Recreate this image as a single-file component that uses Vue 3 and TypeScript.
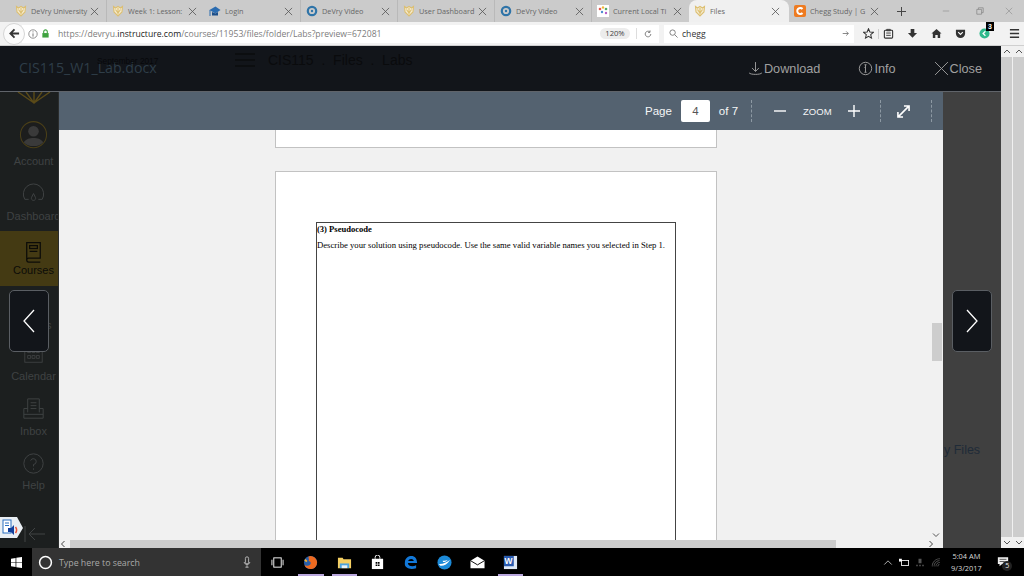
<script setup lang="ts">
interface Tab { title: string; kind: string; active?: boolean; sep?: boolean }
const tabs: Tab[] = [
  { title: 'DeVry University', kind: 'shield', sep: true },
  { title: 'Week 1: Lesson:', kind: 'shield' },
  { title: 'Login', kind: 'cap', sep: true },
  { title: 'DeVry Video', kind: 'ring', sep: true },
  { title: 'User Dashboard', kind: 'shield', sep: true },
  { title: 'DeVry Video', kind: 'ring', sep: true },
  { title: 'Current Local Ti', kind: 'dots' },
  { title: 'Files', kind: 'shield', active: true },
  { title: 'Chegg Study | G', kind: 'chegg' }
]
const navTop = [
  { label: 'Account', kind: 'account' },
  { label: 'Dashboard', kind: 'dash' },
  { label: 'Courses', kind: 'book', active: true },
  { label: 'Grades', kind: 'none' },
  { label: 'Calendar', kind: 'cal' },
  { label: 'Inbox', kind: 'inbox' },
  { label: 'Help', kind: 'help' }
]
</script>

<template>
  <div class="screen">
    <div class="tabbar">
      <div v-for="t in tabs" :key="t.title + t.kind" class="tab" :class="{ active: t.active, sep: t.sep }">
        <svg class="favicon" viewBox="0 0 12 12">
          <g v-if="t.kind === 'shield'" fill="none" stroke="#dcbf72" stroke-width="1.1">
            <path d="M1.5 1.5 L3.5 3 L6 1.5 L8.5 3 L10.5 1.5 L10 7 L6 11 L2 7 Z" fill="#f6ecd0" />
            <path d="M6 3V9.5M3.5 4.5L6 8L8.5 4.5" />
          </g>
          <g v-else-if="t.kind === 'cap'">
            <path d="M0.5 5 L6.5 1.5 L11.5 5 L6.5 8.5 Z" fill="#2b6cb0" />
            <path d="M3 7V10.5H9V7L6.5 8.5Z" fill="#1c4f8a" />
            <path d="M1 5V11" stroke="#2b6cb0" />
          </g>
          <g v-else-if="t.kind === 'ring'">
            <circle cx="6" cy="6" r="4.2" fill="none" stroke="#2f74a8" stroke-width="2.2" />
            <circle cx="6" cy="6" r="1.2" fill="#2f74a8" />
          </g>
          <g v-else-if="t.kind === 'dots'">
            <rect width="12" height="12" fill="#fff" />
            <circle cx="3" cy="4" r="1.3" fill="#e2574c" />
            <circle cx="6" cy="2.5" r="1.2" fill="#f2b632" />
            <circle cx="9" cy="4" r="1.3" fill="#55a868" />
            <circle cx="5" cy="7" r="1.2" fill="#4c8bd0" />
            <circle cx="9" cy="8" r="1.2" fill="#b45cc7" />
          </g>
          <g v-else>
            <rect width="12" height="12" rx="2" fill="#ee7b21" />
            <path d="M8.5 4A3 3 0 1 0 8.5 8" fill="none" stroke="#fff" stroke-width="2" />
          </g>
        </svg>
        <span class="tab-title">{{ t.title }}</span>
        <svg class="tab-close" viewBox="0 0 10 10"><path d="M1 1L9 9M9 1L1 9" stroke="#555" stroke-width="0.9" /></svg>
      </div>
      <svg class="newtab" viewBox="0 0 10 10"><path d="M5 0V10M0 5H10" stroke="#444" stroke-width="1.1" /></svg>
      <div class="winctl">
        <svg viewBox="0 0 10 10"><path d="M1 5H9" stroke="#9a9a9a" /></svg>
        <svg viewBox="0 0 10 10"><path d="M1 3H7V9H1ZM3 3V1H9V7H7" fill="none" stroke="#8a8a8a" /></svg>
        <svg viewBox="0 0 10 10"><path d="M1 1L9 9M9 1L1 9" stroke="#9a9a9a" /></svg>
      </div>
    </div>

    <div class="toolbar">
      <div class="back">
        <svg viewBox="0 0 12 12"><path d="M11 6H2M6 1.5L1.5 6L6 10.5" fill="none" stroke="#333" stroke-width="2" /></svg>
      </div>
      <div class="urlbar">
        <svg class="url-i" viewBox="0 0 10 10"><circle cx="5" cy="5" r="4.2" fill="none" stroke="#777" stroke-width="0.8" /><path d="M5 4.4V7.6M5 2.4V3.4" stroke="#777" /></svg>
        <svg class="url-lock" viewBox="0 0 10 10"><rect x="1.5" y="4.5" width="7" height="5" fill="#3fa33f" /><path d="M3 4.5V3A2 2 0 0 1 7 3V4.5" fill="none" stroke="#3fa33f" stroke-width="1.2" /></svg>
        <span class="url-text">https://devryu.<b>instructure.com</b>/courses/11953/files/folder/Labs?preview=672081</span>
        <span class="zoom-pill">120%</span>
        <span class="url-sep"></span>
        <svg class="reload" viewBox="0 0 10 10"><path d="M8.5 5A3.5 3.5 0 1 1 7.2 2.3M7.5 0.5V3H5" fill="none" stroke="#666" /></svg>
      </div>
      <div class="searchbar">
        <svg class="mag" viewBox="0 0 10 10"><circle cx="4" cy="4" r="3" fill="none" stroke="#777" /><path d="M6.3 6.3L9.5 9.5" stroke="#777" /></svg>
        <span class="search-text">chegg</span>
        <svg class="go" viewBox="0 0 10 10"><path d="M1 5H9M6 2L9 5L6 8" fill="none" stroke="#666" stroke-width="1.1" /></svg>
      </div>
      <div class="tools">
        <svg viewBox="0 0 12 12"><path d="M6 0.8L7.5 4.4L11.3 4.7L8.4 7.2L9.3 11L6 9L2.7 11L3.6 7.2L0.7 4.7L4.5 4.4Z" fill="none" stroke="#333" stroke-width="1.1" /></svg>
        <span class="tool-sep"></span>
        <svg viewBox="0 0 12 12"><rect x="1.5" y="2.5" width="9" height="8.5" rx="1" fill="none" stroke="#333" stroke-width="1.2" /><path d="M4 1.5H8V3H4ZM3.5 5.5H8.5M3.5 8H8.5" fill="none" stroke="#333" /></svg>
        <svg viewBox="0 0 12 12"><path d="M4 1H8V5.5H11L6 10.5L1 5.5H4Z" fill="#333" /></svg>
        <svg viewBox="0 0 12 12"><path d="M6 1L11.5 6H10V11H7.3V7.5H4.7V11H2V6H0.5Z" fill="#333" /></svg>
        <svg viewBox="0 0 12 12"><path d="M1 2H11V6A5 5 0 0 1 1 6Z" fill="#333" /><path d="M3.5 4.5L6 7L8.5 4.5" fill="none" stroke="#fff" stroke-width="1.2" /></svg>
        <div class="ext">
          <svg viewBox="0 0 12 12"><circle cx="6" cy="6" r="5.5" fill="#2fb98c" /><path d="M7 3.5L4.5 6L7 8.5" fill="none" stroke="#fff" stroke-width="1.4" /></svg>
          <span class="ext-badge">3</span>
        </div>
        <svg class="menu" viewBox="0 0 12 12"><path d="M1 2H11M1 6H11M1 10H11" stroke="#333" stroke-width="1.7" /></svg>
      </div>
    </div>

    <div class="page">
      <div class="viewer-head">
        <span class="doc-title">CIS115_W1_Lab.docx</span>
        <span class="ghost-date">September 2017</span>
        <svg class="ghost-burger" viewBox="0 0 20 14"><path d="M0 1H20M0 7H20M0 13H20" stroke="#0b0c0e" stroke-width="1.4" /></svg>
        <span class="ghost-crumb">CIS115 &nbsp;.&nbsp; Files &nbsp;.&nbsp; Labs</span>
        <div class="head-actions">
          <span class="action">
            <svg viewBox="0 0 14 14"><path d="M7 1V9.5M3.8 6.5L7 9.8L10.2 6.5M1 11C2 13 12 13 13 11" fill="none" stroke="#9b9b9b" stroke-width="0.9" /></svg>
            Download
          </span>
          <span class="action">
            <svg viewBox="0 0 14 14"><circle cx="7" cy="7" r="5.8" fill="none" stroke="#9b9b9b" stroke-width="0.9" /><path d="M6 3.5H8M7 3.5V10.5M6 10.5H8M6 6H7" fill="none" stroke="#9b9b9b" stroke-width="0.9" /></svg>
            Info
          </span>
          <span class="action">
            <svg viewBox="0 0 14 14"><path d="M1 1L13 13M13 1L1 13" stroke="#9b9b9b" stroke-width="0.9" /></svg>
            Close
          </span>
        </div>
      </div>

      <div class="body-row">
        <aside class="sidebar">
          <svg class="logo" viewBox="0 0 40 13"><path d="M4 0L20 11L36 0M12 0L20 11L28 0M20 0V11" fill="none" stroke="#5a4a18" stroke-width="1.4" /></svg>
          <div v-for="n in navTop" :key="n.label" class="nav" :class="{ on: n.active, short: n.kind === 'none' }">
            <svg class="nav-icon" viewBox="0 0 30 30">
              <g v-if="n.kind === 'account'" transform="translate(0 -5)">
                <circle cx="15" cy="15" r="13.5" fill="#1c1d1d" stroke="#4a3f18" stroke-width="1.1" />
                <circle cx="15" cy="11.5" r="5.5" fill="#3a3a3a" />
                <path d="M5 23C8 17 22 17 25 23C21 28 9 28 5 23Z" fill="#3a3a3a" />
              </g>
              <g v-else-if="n.kind === 'dash'" fill="none" stroke="#3f4243" stroke-width="1" transform="translate(0 -2)">
                <path d="M6 22A10.5 10.5 0 1 1 24 22H20M10 22H6" />
                <path d="M15 16L13 20A2.2 2.2 0 1 0 17 20Z" />
              </g>
              <g v-else-if="n.kind === 'book'" fill="none" stroke="#0c0c08" stroke-width="1.3" transform="translate(0 3)">
                <path d="M8 24V6H22V22H10A2 2 0 0 0 8 24A2 2 0 0 0 10 26H22" />
                <rect x="11" y="9" width="8" height="3" />
                <path d="M11 15H19" />
              </g>
              <g v-else-if="n.kind === 'cal'" fill="none" stroke="#3f4243" stroke-width="0.9">
                <rect x="6" y="1" width="18" height="22" />
                <path d="M9 10H12V13H9ZM13.5 10H16.5V13H13.5ZM18 10H21V13H18ZM9 16H12V19H9ZM13.5 16H16.5V19H13.5ZM18 16H21V19H18Z" />
              </g>
              <g v-else-if="n.kind === 'inbox'" fill="none" stroke="#3f4243" stroke-width="1">
                <path d="M9 18V4H21V18M12 8H18M12 11H18M12 14H18" />
                <path d="M5 14V24H25V14H21M5 14H9M5 20H25" />
              </g>
              <g v-else-if="n.kind === 'help'" fill="none" stroke="#3f4243" stroke-width="1">
                <circle cx="15" cy="15" r="10" />
                <path d="M12 12A3 3 0 1 1 15 16V18M15 20V21.5" />
              </g>
            </svg>
            <span class="nav-label">{{ n.label }}</span>
          </div>
          <div class="collapse">
            <svg viewBox="0 0 22 16"><path d="M1 0V16M21 8H5M11 2L5 8L11 14" fill="none" stroke="#414445" stroke-width="1" /></svg>
          </div>
        </aside>

        <main class="viewer">
          <div class="pdfbar">
            <span class="pdf-text">Page</span>
            <span class="page-input">4</span>
            <span class="pdf-text">of 7</span>
            <span class="dash-sep first"></span>
            <svg class="pdf-ico" viewBox="0 0 12 12"><path d="M0 6H12" stroke="#fff" stroke-width="1.4" /></svg>
            <span class="zoom-word">ZOOM</span>
            <svg class="pdf-ico" viewBox="0 0 12 12"><path d="M0 6H12M6 0V12" stroke="#fff" stroke-width="1.4" /></svg>
            <span class="dash-sep"></span>
            <svg class="pdf-ico wide" viewBox="0 0 14 14"><path d="M1 13L13 1M7.5 1H13V6.5M1 7.5V13H6.5" fill="none" stroke="#fff" stroke-width="1.7" /></svg>
            <span class="dash-sep"></span>
          </div>
          <div class="doc-row">
            <div class="doc">
              <div class="sheet-end"></div>
              <div class="sheet">
                <div class="box">
                  <div class="box-h">(3) Pseudocode</div>
                  <div class="box-p">Describe your solution using pseudocode. Use the same valid variable names you selected in Step 1.</div>
                </div>
              </div>
            </div>
            <div class="vscroll">
              <span class="vthumb"></span>
              <svg class="vdown" viewBox="0 0 8 8"><path d="M1 2.5L4 5.5L7 2.5" fill="none" stroke="#555" /></svg>
            </div>
          </div>
          <div class="hscroll">
            <svg class="h-arrow" viewBox="0 0 8 8"><path d="M5.5 1L2.5 4L5.5 7" fill="none" stroke="#444" /></svg>
            <span class="hthumb"></span>
            <svg class="h-arrow" viewBox="0 0 8 8"><path d="M2.5 1L5.5 4L2.5 7" fill="none" stroke="#444" /></svg>
          </div>
        </main>

        <div class="dim-right"><span class="ghost-files">y Files</span></div>

        <div class="outer-scroll">
          <div class="os-col">
            <svg class="os-a" viewBox="0 0 8 8"><path d="M1 5.5L4 2.5L7 5.5" fill="none" stroke="#555" /></svg>
            <span class="os-thumb"></span>
            <svg class="os-a" viewBox="0 0 8 8"><path d="M1 2.5L4 5.5L7 2.5" fill="none" stroke="#555" /></svg>
          </div>
          <div class="os-col">
            <svg class="os-a" viewBox="0 0 8 8"><path d="M1 5.5L4 2.5L7 5.5" fill="none" stroke="#555" /></svg>
            <span class="os-thumb"></span>
            <svg class="os-a" viewBox="0 0 8 8"><path d="M1 2.5L4 5.5L7 2.5" fill="none" stroke="#555" /></svg>
          </div>
        </div>

        <button class="pager prev">
          <svg viewBox="0 0 14 24"><path d="M12 1L2 12L12 23" fill="none" stroke="#fff" stroke-width="1.3" /></svg>
        </button>
        <button class="pager next">
          <svg viewBox="0 0 14 24"><path d="M2 1L12 12L2 23" fill="none" stroke="#fff" stroke-width="1.3" /></svg>
        </button>
        <div class="reader">
          <svg viewBox="0 0 24 22">
            <path d="M0 0H17L23 11L17 21H0Z" fill="#e9eef3" />
            <rect x="3" y="3" width="8" height="13" fill="#fff" stroke="#2a6fc0" />
            <path d="M5 6H9M5 8.5H9" stroke="#2a6fc0" />
            <path d="M8 11H11L14 8V18L11 15H8Z" fill="#123f9c" />
            <path d="M15.5 10C17 12 17 14 15.5 16" fill="none" stroke="#e8553a" stroke-width="1.5" />
          </svg>
        </div>
      </div>
    </div>

    <footer class="taskbar">
      <div class="start">
        <svg viewBox="0 0 12 12"><path d="M0 1.8L5 1V5.6H0ZM5.8 0.9L12 0V5.6H5.8ZM0 6.4H5V11L0 10.2ZM5.8 6.4H12V12L5.8 11.1Z" fill="#fff" /></svg>
      </div>
      <div class="search">
        <svg class="cortana" viewBox="0 0 16 16"><circle cx="8" cy="8" r="6.3" fill="none" stroke="#fff" stroke-width="1.6" /></svg>
        <span class="search-hint">Type here to search</span>
        <svg class="mic" viewBox="0 0 10 14"><rect x="3" y="0.5" width="4" height="9" rx="2" fill="none" stroke="#ccc" /><path d="M1.5 7C1.5 11 8.5 11 8.5 7M5 11V13.5M3 13.5H7" fill="none" stroke="#ccc" /></svg>
      </div>
      <div class="apps">
        <span class="app"><svg viewBox="0 0 14 14"><rect x="3" y="2" width="8" height="10" fill="none" stroke="#fff" /><path d="M1 4V10M13 4V10" stroke="#fff" /></svg></span>
        <span class="app open"><svg viewBox="0 0 16 16"><circle cx="8" cy="8" r="7" fill="#2a5fa8" /><path d="M8 1A7 7 0 1 1 1.3 10C3 12 6 12 7.5 10.5C9 9 8 6.5 6 6.5C7 4 5.5 4 6 1.5C6.5 1.2 7.3 1 8 1Z" fill="#ee6a1f" /><path d="M2 5L4 7" stroke="#f7b52c" stroke-width="2" /></svg></span>
        <span class="app open"><svg viewBox="0 0 16 16"><path d="M1 3H6L7 4.5H15V14H1Z" fill="#f5cf62" /><path d="M3 9H13V14H3Z" fill="#4da3dd" /><path d="M5 11H11V14H5Z" fill="#e9f3f9" /></svg></span>
        <span class="app"><svg viewBox="0 0 16 16"><path d="M5.5 4V2.5A2.5 2.5 0 0 1 10.5 2.5V4" fill="none" stroke="#fff" /><path d="M2 4H14V15H2Z" fill="#fff" /><path d="M6 7.5H7.8V9.3H6ZM8.4 7.5H10.2V9.3H8.4ZM6 10H7.8V11.8H6ZM8.4 10H10.2V11.8H8.4Z" fill="#000" /></svg></span>
        <span class="app"><svg viewBox="0 0 16 16"><path d="M2 8C2 3 6 1 9 1C12.5 1 15 3.5 15 8.5H5.2C5.5 12 10 13 14 11V14C8.5 16 1 14.5 2 8ZM5.5 6.5H11.5C11.3 3.5 6.2 3.5 5.5 6.5Z" fill="#1278d8" /></svg></span>
        <span class="app"><svg viewBox="0 0 16 16"><circle cx="8" cy="8" r="7.5" fill="#1c8ad8" /><path d="M2 9.5C6 10 10 8 14 5C11 10 7 12 3.5 11.5ZM6 6C8 6.5 10 6 11.5 5C10 7 8 7.5 6.5 7.5Z" fill="#fff" /></svg></span>
        <span class="app"><svg viewBox="0 0 16 16"><path d="M0.5 6L8 1.5L15.5 6V14H0.5Z" fill="#fff" /><path d="M0.5 6L8 10.5L15.5 6" fill="none" stroke="#000" /></svg></span>
        <span class="app open"><svg viewBox="0 0 16 16"><rect x="1" y="1" width="14" height="14" fill="#dfe9f6" /><rect x="1" y="1" width="10.5" height="11" fill="#2a5bb0" /><text x="1.7" y="10" font-size="9" font-weight="700" fill="#fff" font-family="Liberation Sans, sans-serif">W</text></svg></span>
      </div>
      <div class="tray">
        <svg viewBox="0 0 12 8"><path d="M1.5 6.5L6 2L10.5 6.5" fill="none" stroke="#ccc" /></svg>
        <svg viewBox="0 0 12 10"><rect x="3" y="2.5" width="8.5" height="6" fill="none" stroke="#fff" /><rect x="0" y="0.5" width="3.4" height="3.4" fill="#fff" /></svg>
        <svg viewBox="0 0 12 12"><path d="M4 1H8V7H4ZM1 9H3V11H1ZM5 9H7V11H5ZM9 9H11V11H9Z" fill="#555" /></svg>
        <svg viewBox="0 0 12 12"><path d="M1 11A10 10 0 0 1 11 1M3.5 11A7.5 7.5 0 0 1 11 3.5M6 11A5 5 0 0 1 11 6M8.5 11A2.5 2.5 0 0 1 11 8.5" fill="none" stroke="#aaa" stroke-dasharray="1 0.6" /></svg>
      </div>
      <div class="clock"><span>5:04 AM</span><span>9/3/2017</span></div>
      <div class="notify">
        <svg viewBox="0 0 14 12"><path d="M1 1H13V9H6L3 11.5V9H1Z" fill="#eee" /><path d="M3 3.5H11M3 6H9" stroke="#000" stroke-width="0.7" /></svg>
        <span class="notify-n">5</span>
      </div>
    </footer>
  </div>
</template>

<style>
html, body { margin: 0; padding: 0; background: #000; }
</style>

<style scoped>
.screen { width: 1024px; height: 576px; overflow: hidden; display: flex; flex-direction: column; font-family: "Liberation Sans", Arial, sans-serif; }

.tabbar { height: 22px; background: #cbcbcb; display: flex; align-items: center; padding-left: 10px; box-sizing: border-box; font-family: "Open Sans", sans-serif; flex: none; }
.tab { width: 97px; height: 22px; box-sizing: border-box; display: flex; align-items: center; padding: 0 7px 0 5px; flex: none; position: relative; }
.tab.sep { border-right: 1px solid #b9b9b9; }
.tab.active { width: 100px; background: #f0f0f0; border-radius: 8px 8px 0 0; padding-left: 5px; padding-right: 9px; }
.favicon { width: 12px; height: 12px; flex: none; margin-right: 4px; }
.tab-title { flex: 1; font-size: 7.3px; color: #666; white-space: nowrap; min-width: 0; }
.tab-close { width: 9px; height: 9px; flex: none; margin-left: 3px; }
.newtab { width: 9px; height: 9px; margin-left: 11px; flex: none; }
.winctl { margin-left: auto; display: flex; padding-right: 11px; align-items: center; }
.winctl svg { width: 8px; height: 8px; }
.winctl svg:nth-child(2) { margin-left: 26px; }
.winctl svg:nth-child(3) { margin-left: 21px; }

.toolbar { height: 24px; background: #f2f2f2; border-bottom: 1px solid #cfcfcf; display: flex; align-items: center; box-sizing: border-box; padding-left: 3px; font-family: "Open Sans", sans-serif; flex: none; }
.back { width: 22px; height: 22px; border-radius: 50%; background: #fbfbfb; border: 1px solid #d5d5d5; box-sizing: border-box; display: flex; align-items: center; justify-content: center; flex: none; position: relative; z-index: 1; }
.back svg { width: 11px; height: 11px; }
.urlbar { margin-left: -3px; width: 637px; height: 18px; background: #fff; display: flex; align-items: center; padding-left: 6px; box-sizing: border-box; flex: none; }
.url-i { width: 10px; height: 10px; flex: none; }
.url-lock { width: 9px; height: 9px; margin-left: 3px; flex: none; }
.url-text { margin-left: 8px; font-size: 8.65px; color: #7c7c7c; white-space: nowrap; width: 542px; flex: none; }
.url-text b { font-weight: 400; color: #1c1c1c; }
.zoom-pill { width: 30px; height: 11px; line-height: 11px; border-radius: 6px; background: #ececec; color: #444; font-size: 7.6px; text-align: center; flex: none; }
.url-sep { width: 1px; height: 11px; background: #ddd; margin-left: 6px; flex: none; }
.reload { width: 8px; height: 8px; margin-left: 7px; flex: none; }
.searchbar { margin-left: 5px; width: 190px; height: 18px; background: #fff; display: flex; align-items: center; padding: 0 5px; box-sizing: border-box; flex: none; }
.mag { width: 9px; height: 9px; flex: none; }
.search-text { margin-left: 4px; font-size: 8.6px; color: #333; }
.go { width: 7px; height: 7px; margin-left: auto; margin-right: 0; }
.tools { display: flex; align-items: center; margin-left: 9px; }
.tools > svg { width: 11px; height: 11px; flex: none; margin-right: 13px; }
.tools > svg:first-child { margin-right: 4px; }
.tool-sep { width: 1px; height: 10px; background: #ccc; margin-right: 4px; }
.ext { position: relative; width: 11px; height: 11px; margin-right: 19px; }
.ext svg { width: 11px; height: 11px; display: block; }
.ext-badge { position: absolute; top: -6px; right: -4px; width: 8px; height: 9px; background: #000; color: #fff; font-size: 7px; line-height: 9px; text-align: center; font-weight: 700; font-family: "Liberation Sans", sans-serif; }
.tools > .menu { margin-right: 0; }

.page { flex: 1; min-height: 0; display: flex; flex-direction: column; }
.viewer-head { height: 46px; box-sizing: border-box; background: #12151a; border-bottom: 1px solid #60646a; display: flex; align-items: center; position: relative; padding-left: 19px; padding-right: 19px; flex: none; margin-right: 23px; }
.doc-title { font-family: "Open Sans", sans-serif; font-size: 14.2px; color: #2e3d48; width: 216px; flex: none; margin-top: -3px; }
.ghost-date { position: absolute; left: 97px; top: 10px; font-size: 8.3px; color: #07080a; white-space: nowrap; }
.ghost-burger { width: 20px; height: 14px; flex: none; margin-top: -18px; }
.ghost-crumb { margin-left: 13px; margin-top: -18px; font-size: 14px; color: #0a0b0d; white-space: nowrap; }
.head-actions { margin-left: auto; display: flex; gap: 38px; }
.action { display: flex; align-items: center; gap: 1px; font-size: 12.7px; color: #a0a0a0; }
.action svg { width: 15px; height: 15px; }

.body-row { flex: 1; min-height: 0; display: flex; position: relative; }
.sidebar { width: 59px; flex: none; background: #1c1f1f; border-right: 1px solid #2b2d2d; box-sizing: border-box; display: flex; flex-direction: column; align-items: stretch; overflow: hidden; }
.logo { width: 40px; height: 13px; margin: 0 0 17px 14px; flex: none; }
.nav { height: 54.5px; box-sizing: border-box; display: flex; flex-direction: column; align-items: center; justify-content: flex-start; padding: 3px 0 0 9px; flex: none; }
.nav.short { height: 51.5px; }
.nav.on { background: #443a13; }
.nav-icon { width: 29px; height: 29px; flex: none; overflow: visible; }
.nav-label { font-size: 11px; line-height: 13px; margin-top: 1px; color: #3f4243; white-space: nowrap; }
.nav.on .nav-label { color: #0c0c08; }
.collapse { margin-top: 25px; padding-left: 24px; }
.collapse svg { width: 22px; height: 16px; display: block; }

.viewer { width: 884px; flex: none; display: flex; flex-direction: column; background: #f1f1f1; min-width: 0; }
.pdfbar { height: 38px; background: #546270; display: flex; align-items: center; box-sizing: border-box; padding-left: 586px; flex: none; }
.pdf-text { font-size: 11.5px; color: #f4f6f7; white-space: nowrap; }
.page-input { width: 29px; height: 22px; margin: 0 9px; background: #fff; border-radius: 2px; color: #555; font-size: 11.5px; line-height: 22px; text-align: center; flex: none; }
.dash-sep { width: 0; height: 22px; border-left: 1px dashed #8d99a3; margin: 0 16px 0 0; flex: none; }
.dash-sep.first { margin-left: 13px; margin-right: 22px; }
.pdf-ico { width: 12px; height: 12px; flex: none; }
.pdf-ico:not(.wide) + .dash-sep { margin-left: 20px; }
.pdf-ico.wide { width: 13px; height: 13px; margin-right: 21px; }
.zoom-word { font-size: 9.5px; color: #f4f6f7; margin: 0 16px 0 17px; }

.doc-row { flex: 1; min-height: 0; display: flex; }
.doc { flex: 1; min-width: 0; overflow: hidden; padding-left: 216px; }
.sheet-end { width: 442px; height: 18px; box-sizing: border-box; background: #fff; border: 1px solid #c2c2c2; border-top: none; }
.sheet { width: 442px; height: 400px; margin-top: 23px; box-sizing: border-box; background: #fff; border: 1px solid #c2c2c2; padding: 50px 0 0 40px; }
.box { width: 360px; height: 340px; box-sizing: border-box; border: 1.5px solid #444; padding-top: 1px; font-family: "Liberation Serif", "Times New Roman", serif; color: #000; }
.box-h { font-size: 8.55px; font-weight: 700; line-height: 11px; }
.box-p { font-size: 8.68px; line-height: 11px; margin-top: 5px; white-space: nowrap; }
.vscroll { width: 12px; flex: none; display: flex; flex-direction: column; position: relative; background: #f1f1f1; }
.vthumb { display: block; width: 10px; height: 38px; margin: 193px 0 0 1px; background: #cdcdcd; }
.vdown { width: 8px; height: 8px; margin-top: auto; margin-left: 1px; margin-bottom: 1px; }
.hscroll { height: 8px; background: #f1f1f1; display: flex; align-items: center; flex: none; }
.h-arrow { width: 8px; height: 8px; flex: none; }
.hthumb { display: block; width: 766px; height: 8px; margin-left: 3px; margin-right: 91px; background: #cdcdcd; }

.dim-right { width: 58px; flex: none; background: #404040; position: relative; font-size: 12.5px; overflow: hidden; }
.ghost-files { position: absolute; left: 1px; top: 351px; color: #1f2b38; white-space: nowrap; }
.outer-scroll { width: 23px; flex: none; display: flex; gap: 1px; background: #f0f0f0; margin-top: -46px; position: relative; }
.os-col { flex: 1; display: flex; flex-direction: column; align-items: center; }
.os-a { width: 8px; height: 11px; flex: none; }
.os-thumb { flex: 1; width: 100%; background: #cdcdcd; }

.pager { position: absolute; top: 198px; width: 40px; height: 62px; box-sizing: border-box; padding: 0; background: #12151a; border: 1px solid #5a5e63; border-radius: 5px; display: flex; align-items: center; justify-content: center; }
.pager svg { width: 14px; height: 24px; }
.prev { left: 9px; }
.next { left: 952px; }
.reader { position: absolute; left: 0; top: 425px; width: 24px; height: 22px; }
.reader svg { width: 24px; height: 22px; display: block; }

.taskbar { height: 28px; background: #000; display: flex; align-items: center; flex: none; font-family: "Open Sans", sans-serif; }
.start { width: 32px; display: flex; justify-content: center; flex: none; }
.start svg { width: 11px; height: 11px; }
.search { width: 229px; height: 28px; background: #333; display: flex; align-items: center; padding-left: 6px; box-sizing: border-box; flex: none; }
.cortana { width: 15px; height: 15px; flex: none; }
.search-hint { margin-left: 6px; margin-top: 1px; font-size: 8.8px; color: #a9a9a9; white-space: nowrap; }
.mic { width: 8px; height: 12px; margin-left: auto; margin-right: 10px; }
.apps { display: flex; flex: none; }
.app { width: 33.3px; height: 28px; display: flex; align-items: center; justify-content: center; position: relative; box-sizing: border-box; }
.app svg { width: 15px; height: 15px; }
.app:first-child svg { width: 13px; height: 13px; }
.app.open::after { content: ""; position: absolute; left: 4px; right: 4px; bottom: 0; height: 2px; background: #b9a7dd; }
.tray { display: flex; align-items: center; gap: 6px; margin-left: 356px; flex: none; }
.tray svg { width: 10px; height: 9px; }
.clock { margin-left: 5px; display: flex; flex-direction: column; align-items: center; width: 40px; font-size: 7.4px; line-height: 12px; color: #d8d8d8; flex: none; }
.notify { position: relative; margin-left: 11px; width: 12px; height: 12px; flex: none; }
.notify svg { width: 12px; height: 11px; display: block; }
.notify-n { position: absolute; left: 5px; top: 5px; width: 10px; height: 10px; border-radius: 50%; background: #222; color: #eee; font-size: 7px; line-height: 10px; text-align: center; }
</style>
